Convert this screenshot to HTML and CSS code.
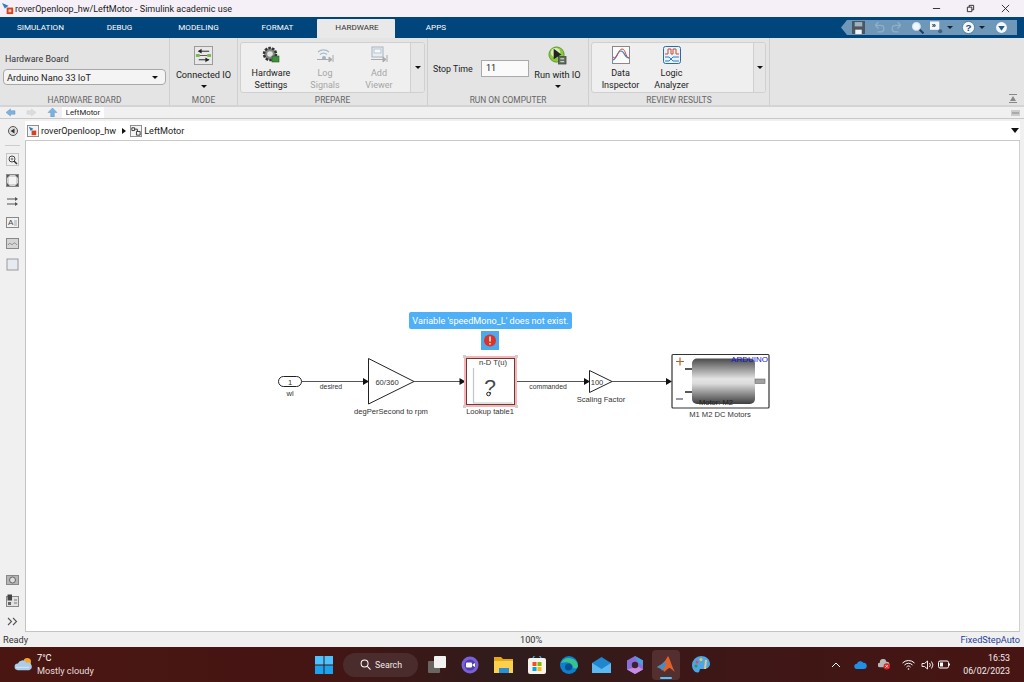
FILE: index.html
```html
<!DOCTYPE html>
<html lang="en">
<head>
<meta charset="utf-8">
<title>roverOpenloop_hw/LeftMotor - Simulink academic use</title>
<link rel="stylesheet" href="styles.css">
</head>
<body>
<div class="app">
  <header class="titlebar">
    <svg class="ico-title" viewBox="0 0 14 14"><path d="M0 1l7 3-4 3z" fill="#2a7fc4"/><rect x="5" y="6" width="7" height="7" fill="#d8401f"/><rect x="7" y="8" width="3" height="3" fill="#f3c9b5"/></svg>
    <span class="title-text">roverOpenloop_hw/LeftMotor - Simulink academic use</span>
    <div class="win-controls">
      <svg viewBox="0 0 10 10" class="win-ico win-min"><path d="M1 5h8" stroke="#222" stroke-width="1"/></svg>
      <svg viewBox="0 0 10 10" class="win-ico win-rest"><path d="M1.5 3.5h5v5h-5zM3.5 3.5v-2h5v5h-2" fill="none" stroke="#222"/></svg>
      <svg viewBox="0 0 10 10" class="win-ico win-close"><path d="M1 1l8 8M9 1l-8 8" stroke="#222"/></svg>
    </div>
  </header>

  <nav class="tabbar">
    <span class="tab">SIMULATION</span>
    <span class="tab">DEBUG</span>
    <span class="tab">MODELING</span>
    <span class="tab">FORMAT</span>
    <span class="tab tab-active">HARDWARE</span>
    <span class="tab tab-apps">APPS</span>
    <div class="qat">
      <svg class="q q-save" viewBox="0 0 12 12"><path d="M0 0h12v12H0z" fill="#4c5660"/><rect x="2.500" y="1" width="7" height="4" fill="#9fb2c2"/><rect x="3" y="8" width="6" height="4" fill="#f0f2f4"/></svg>
      <svg class="q q-undo" viewBox="0 0 12 12"><path d="M3 4h5a3 3 0 0 1 0 6H5M3 4l3-3M3 4l3 3" fill="none" stroke="#8fb0ca" stroke-width="1.200"/></svg>
      <svg class="q q-redo" viewBox="0 0 12 12"><path d="M9 4H4a3 3 0 0 0 0 6h3M9 4L6 1M9 4L6 7" fill="none" stroke="#8fb0ca" stroke-width="1.200"/></svg>
      <svg class="q q-search" viewBox="0 0 12 12"><circle cx="5" cy="5" r="3.600" fill="#f0f6fb" stroke="#cfe0ee" stroke-width="1"/><path d="M8 8l3.500 3.500" stroke="#173f66" stroke-width="1.800"/></svg>
      <svg class="q q-custom" viewBox="0 0 14 13"><rect x="0" y="0" width="10" height="9" fill="#f4f7fa"/><text x="2" y="7" class="q-chev">»</text><circle cx="11" cy="10.500" r="2.200" fill="#3f6280"/></svg>
      <span class="q-arrow q-arrow-a"></span>
      <svg class="q q-help" viewBox="0 0 12 12"><circle cx="6" cy="6" r="5.600" fill="#f4f7fa" stroke="#2f5f86" stroke-width=".6"/><text x="6" y="9.200" class="q-qm">?</text></svg>
      <span class="q-arrow q-arrow-b"></span>
      <svg class="q q-min" viewBox="0 0 12 12"><circle cx="6" cy="6" r="5" fill="#f3f7fa"/><path d="M3 4.500h6L6 9z" fill="#1f5a88"/></svg>
    </div>
  </nav>

  <section class="ribbon">
    <div class="group g-board">
      <div class="group-body board-body">
        <div class="board-label">Hardware Board</div>
        <div class="select"><span>Arduino Nano 33 IoT</span><i class="caret"></i></div>
      </div>
      <div class="group-label">HARDWARE BOARD</div>
    </div>
    <div class="group g-mode">
      <div class="group-body split-body">
        <svg class="ico-big" viewBox="0 0 20 20"><rect x="0.5" y="0.5" width="19" height="19" fill="#e8e8e8" stroke="#999"/><path d="M5 5.500h11M5 14.500h11" stroke="#222"/><path d="M8 3v5l-4-2.500zM12 12v5l4-2.500z" fill="#222"/><rect x="2" y="8.500" width="4" height="3" fill="#7ab648"/><rect x="14" y="8.500" width="4" height="3" fill="#7ab648"/><path d="M6 10h8" stroke="#555"/></svg>
        <div class="btn-text">Connected IO</div>
        <i class="caret caret-center"></i>
      </div>
      <div class="group-label">MODE</div>
    </div>
    <div class="group g-prepare">
      <div class="group-body">
        <div class="gallery">
          <div class="gal-item">
            <svg class="ico-gal" viewBox="0 0 18 18"><circle cx="8" cy="8" r="6" fill="#888" stroke="#333" stroke-width="2.500" stroke-dasharray="2.500 1.200"/><circle cx="8" cy="8" r="2.800" fill="#e2e2e2"/><rect x="10" y="10" width="7" height="6" fill="#3f8f3f" stroke="#1e5e1e" stroke-width=".6"/></svg>
            <span>Hardware</span><span>Settings</span>
          </div>
          <div class="gal-item gal-off">
            <svg class="ico-gal" viewBox="0 0 18 18"><path d="M2 6a8 8 0 0 1 11 0M4 8.500a5 5 0 0 1 7 0" fill="none" stroke="#a6bccb" stroke-width="1.200"/><circle cx="8" cy="12" r="2" fill="#9fb4c2"/><path d="M1 13.500h15M13 11v5l3-2.500zM17 9v7" stroke="#aaa" fill="#aaa"/></svg>
            <span>Log</span><span>Signals</span>
          </div>
          <div class="gal-item gal-off">
            <svg class="ico-gal" viewBox="0 0 18 18"><rect x="2" y="1" width="11" height="10" fill="#e8eef4" stroke="#a6b4c0"/><rect x="4" y="3" width="7" height="4" fill="#f8f8f8" stroke="#b9c6d2"/><path d="M1 13.500h15M13 11v5l3-2.500zM17 9v7" stroke="#aaa" fill="#aaa"/></svg>
            <span>Add</span><span>Viewer</span>
          </div>
          <div class="gal-more"><i class="caret"></i></div>
        </div>
      </div>
      <div class="group-label">PREPARE</div>
    </div>
    <div class="group g-run">
      <div class="group-body run-body">
        <span class="stop-label">Stop Time</span>
        <span class="stop-input">11</span>
        <div class="run-btn">
          <svg class="ico-run" viewBox="0 0 20 20"><circle cx="9" cy="9" r="8" fill="#8cc63f" stroke="#5f9a2a"/><circle cx="8" cy="7" r="5" fill="#d4edb4"/><path d="M6 3l8 6-8 5z" fill="#222"/><rect x="11" y="11" width="8" height="8" fill="#5d6d5d" stroke="#333" stroke-width=".6"/><path d="M13 13.500h4M13 16.500h4" stroke="#e8f2e0"/></svg>
          <div class="btn-text">Run with IO</div>
          <i class="caret caret-center"></i>
        </div>
      </div>
      <div class="group-label">RUN ON COMPUTER</div>
    </div>
    <div class="group g-review">
      <div class="group-body">
        <div class="gallery gallery-review">
          <div class="gal-item gal-narrow">
            <svg class="ico-gal" viewBox="0 0 18 18"><rect x="0.500" y="0.500" width="17" height="17" fill="#fafafa" stroke="#888"/><path d="M1 14c4-1 4-9 8-9s3 7 8 7" fill="none" stroke="#3b7fc4" stroke-width="1.200"/><path d="M1 11c4 4 5-8 9-8s3 8 7 9" fill="none" stroke="#d1492e"/></svg>
            <span>Data</span><span>Inspector</span>
          </div>
          <div class="gal-item gal-narrow">
            <svg class="ico-gal" viewBox="0 0 18 18"><rect x="0.500" y="0.500" width="17" height="17" rx="2" fill="#e8f2fb" stroke="#2f6c98"/><path d="M2 8h3V3h3v5h2V3h3v5h3" fill="none" stroke="#d1492e"/><path d="M2 11h4l4 4h6M2 15h4l4-4h6" fill="none" stroke="#2f7fc4"/></svg>
            <span>Logic</span><span>Analyzer</span>
          </div>
          <div class="gal-more"><i class="caret"></i></div>
        </div>
      </div>
      <div class="group-label">REVIEW RESULTS</div>
    </div>
    <svg class="ribbon-collapse" viewBox="0 0 8 9"><path d="M0 .5h8M0 8.500h8" stroke="#888"/><path d="M4 2l3 5H1z" fill="#888"/></svg>
  </section>

  <div class="docbar">
    <svg class="nav-ico" viewBox="0 0 12 10"><path d="M1 5l5-4v2h5v4H6v2z" fill="#7db2dd" stroke="#5a93c2" stroke-width=".5"/></svg>
    <svg class="nav-ico" viewBox="0 0 12 10"><path d="M11 5L6 1v2H1v4h5v2z" fill="#dcdcdc" stroke="#cfcfcf" stroke-width=".5"/></svg>
    <svg class="nav-ico" viewBox="0 0 12 10"><path d="M6 0l5 5H8v5H4V5H1z" fill="#7db2dd" stroke="#5a93c2" stroke-width=".5"/></svg>
    <span class="doc-tab">LeftMotor</span>
    <svg class="doc-menu" viewBox="0 0 9 6"><rect width="9" height="6" fill="#ccc"/><path d="M1 3h7" stroke="#888"/></svg>
  </div>

  <main class="workspace">
    <aside class="tools">
      <div class="tools-top">
        <svg class="tool tool-back" viewBox="0 0 12 12"><circle cx="6" cy="6" r="4.500" fill="#ddd" stroke="#555"/><path d="M7.500 3.500v5L3.500 6z" fill="#333"/></svg>
        <hr class="tool-sep">
        <svg class="tool" viewBox="0 0 13 13"><rect x=".5" y=".5" width="12" height="12" fill="none" stroke="#999" stroke-dasharray="1 1"/><circle cx="6" cy="6" r="3" fill="#fff" stroke="#444"/><path d="M8 8l3 3" stroke="#333" stroke-width="1.500"/><path d="M4.500 6h3M6 4.500v3" stroke="#444" stroke-width=".7"/></svg>
        <svg class="tool" viewBox="0 0 13 13"><rect x=".5" y=".5" width="12" height="12" fill="#d2d2d2" stroke="#888"/><rect x="3" y="3" width="7" height="7" fill="#f4f4f4"/><path d="M1 1l3 0-3 3zM12 1l-3 0 3 3zM1 12l3 0-3-3zM12 12l-3 0 3-3z" fill="#555"/></svg>
        <svg class="tool" viewBox="0 0 13 13"><path d="M1 4h10M1 9h10" stroke="#555"/><path d="M9 2l3 2-3 2zM9 7l3 2-3 2z" fill="#555"/></svg>
        <svg class="tool" viewBox="0 0 13 13"><rect x=".5" y="1.500" width="12" height="10" fill="#f1f1f1" stroke="#888"/><text x="2" y="9" class="tool-a">A</text><path d="M8 5h3M8 7h3M8 9h3" stroke="#888" stroke-width=".7"/></svg>
        <svg class="tool" viewBox="0 0 13 13"><rect x=".5" y="1.500" width="12" height="10" fill="#d5d5d5" stroke="#888"/><path d="M2 8c2-4 3 1 5-1s2-1 4 1" fill="none" stroke="#888"/></svg>
        <svg class="tool" viewBox="0 0 13 13"><rect x="1" y="1" width="11" height="11" fill="#e8eaf2" stroke="#999"/></svg>
      </div>
      <div class="tools-bottom">
        <svg class="tool" viewBox="0 0 13 13"><rect x=".5" y="2.500" width="12" height="9" fill="#b5b5b5" stroke="#888"/><circle cx="6.500" cy="7" r="3" fill="#ddd" stroke="#666"/></svg>
        <svg class="tool" viewBox="0 0 13 13"><rect x=".5" y="2.500" width="12" height="10" fill="#e2e2e2" stroke="#888"/><rect x="1.500" y=".5" width="4.500" height="6" fill="#444"/><rect x="2" y="8" width="3" height="3" fill="#666"/><path d="M8 6h3M8 9h3" stroke="#777"/></svg>
        <svg class="tool" viewBox="0 0 13 13"><path d="M2 3l3.500 3.500L2 10M7 3l3.500 3.500L7 10" fill="none" stroke="#555" stroke-width="1.100"/></svg>
      </div>
    </aside>

    <div class="editor">
      <div class="crumbs">
        <span class="crumb-ico"><svg viewBox="0 0 13 13"><rect x=".5" y=".5" width="12" height="12" fill="#f4f4f4" stroke="#888"/><path d="M2 2l5 2-3 2.500z" fill="#2a7fc4"/><rect x="5" y="6" width="5" height="5" fill="#d8401f"/></svg></span>
        <span class="crumb-text">roverOpenloop_hw</span>
        <i class="crumb-arrow"></i>
        <span class="crumb-ico"><svg viewBox="0 0 13 13"><rect x=".5" y=".5" width="12" height="12" fill="#f4f4f4" stroke="#888"/><path d="M2 3h3v3H2zM7 7h4v4H7zM5 4.500h3v2.500" fill="none" stroke="#333"/></svg></span>
        <span class="crumb-text">LeftMotor</span>
        <i class="caret crumb-caret"></i>
      </div>
      <div class="canvas">
        <svg class="diagram" viewBox="25 141 995 491">
          <defs>
            <linearGradient id="motorGrad" x1="0" y1="0" x2="0" y2="1">
              <stop offset="0" stop-color="#4a4a4a"/>
              <stop offset=".45" stop-color="#e4e4e4"/>
              <stop offset=".55" stop-color="#dcdcdc"/>
              <stop offset="1" stop-color="#3e3e3e"/>
            </linearGradient>
          </defs>
          <rect x="409" y="312" width="163" height="17" rx="2" class="tip"/>
          <text x="490.500" y="323.500" class="tip-text">Variable 'speedMono_L' does not exist.</text>
          <rect x="481" y="331" width="18" height="19" class="err-bg"/>
          <circle cx="490" cy="340.500" r="6" class="err-dot"/>
          <path d="M490 336.500v5M490 343v1.500" class="err-mark"/>

          <rect x="278.500" y="376.500" width="23" height="10" rx="5" class="block"/>
          <text x="290" y="384.500" class="lbl">1</text>
          <text x="290" y="396" class="lbl">wl</text>
          <path d="M302 381.500h62" class="wire"/>
          <path d="M363 378l6 3.500-6 3.500z" class="head"/>
          <text x="331" y="389" class="lbl lbl-sm">desired</text>

          <path d="M368.500 358.500l45.500 23-45.500 22.500z" class="block"/>
          <text x="387" y="384.500" class="lbl">60/360</text>
          <text x="391" y="414" class="lbl">degPerSecond to rpm</text>
          <path d="M414 381.500h46" class="wire"/>
          <path d="M459.500 378l6 3.500-6 3.500z" class="head"/>

          <rect x="464" y="356" width="53" height="51" class="sel"/>
          <rect x="466.500" y="358.500" width="48" height="46" class="block block-sel"/>
          <path d="M463 356.500h3M515 356.500h3M463 406.500h3M515 406.500h3" class="corner"/>
          <text x="493" y="365" class="lbl">n-D T(u)</text>
          <path d="M473.500 368v35h39" class="axis"/>
          <text x="490" y="394" class="qmark">?</text>
          <circle cx="488.500" cy="394" r="1.800" class="block"/>
          <text x="490" y="414" class="lbl">Lookup table1</text>

          <path d="M517 381.500h68" class="wire"/>
          <path d="M584 378l6 3.500-6 3.500z" class="head"/>
          <text x="548" y="389" class="lbl lbl-sm">commanded</text>
          <path d="M589.500 370.500l22.500 11-22.500 11z" class="block"/>
          <text x="597" y="384.500" class="lbl">100</text>
          <text x="601" y="402" class="lbl">Scaling Factor</text>
          <path d="M612 381.500h55" class="wire"/>
          <path d="M666 378l6 3.500-6 3.500z" class="head"/>

          <rect x="672" y="354.500" width="97" height="53.500" rx="1" class="block block-heavy"/>
          <rect x="692" y="358.500" width="63" height="45.500" rx="5" fill="url(#motorGrad)"/>
          <rect x="755" y="379" width="10" height="4.500" class="shaft"/>
          <path d="M685 369h7M685 392h7" class="pin"/>
          <path d="M676 361.500h8M680 357.500v8" class="plus"/>
          <path d="M676 399h7" class="minus"/>
          <text x="768" y="362" class="ard">ARDUINO</text>
          <text x="716" y="405" class="lbl lbl-motor">Motor: M2</text>
          <text x="720" y="417" class="lbl">M1 M2 DC Motors</text>
        </svg>
      </div>
    </div>
    <div class="right-strip"></div>
  </main>

  <footer class="statusbar">
    <span class="st-left">Ready</span>
    <span class="st-mid">100%</span>
    <span class="st-right">FixedStepAuto</span>
  </footer>

  <div class="taskbar">
    <div class="weather">
      <svg class="ico-weather" viewBox="0 0 20 16"><circle cx="14" cy="5" r="4" fill="#f5a623"/><path d="M4 14a3.500 3.500 0 0 1 0-7 5 5 0 0 1 9-1 4 4 0 0 1 3 8z" fill="#a9cdea"/><path d="M2 11h14" stroke="#dbeaf6"/></svg>
      <div class="weather-text"><span class="w-temp">7°C</span><span class="w-desc">Mostly cloudy</span></div>
    </div>
    <div class="task-center">
      <svg class="t-ico t-win" viewBox="0 0 18 18"><rect width="8.500" height="8.500" fill="#4cc2ff"/><rect x="9.500" width="8.500" height="8.500" fill="#4cc2ff"/><rect y="9.500" width="8.500" height="8.500" fill="#1ba3ee"/><rect x="9.500" y="9.500" width="8.500" height="8.500" fill="#1ba3ee"/></svg>
      <div class="t-search">
        <svg class="t-search-ico" viewBox="0 0 12 12"><circle cx="5" cy="5" r="3.800" fill="none" stroke="#fff" stroke-width="1.100"/><path d="M8 8l3.500 3.500" stroke="#fff" stroke-width="1.100"/></svg>
        <span>Search</span>
      </div>
      <svg class="t-ico t-task" viewBox="0 0 18 18"><rect y="5" width="12" height="12" rx="1" fill="#6b6562"/><rect x="6" width="12" height="12" rx="1" fill="#f2f2f2"/></svg>
      <svg class="t-ico t-chat" viewBox="0 0 18 18"><circle cx="9" cy="9" r="8.500" fill="#7a63d8"/><circle cx="9" cy="9" r="5.500" fill="#4d3fb0"/><rect x="5" y="6.500" width="6" height="5" rx="1" fill="#fff"/><path d="M11.500 8.500l2.500-1.500v4l-2.500-1.500z" fill="#fff"/></svg>
      <svg class="t-ico t-files" viewBox="0 0 19 18"><path d="M0 1h7l2 2h10v14H0z" fill="#e8a80f"/><rect y="5" width="19" height="12" fill="#fcd04f"/><rect x="5" y="12" width="10" height="5" fill="#2a8fd8"/></svg>
      <svg class="t-ico t-store" viewBox="0 0 18 18"><path d="M5 3a4 4 0 0 1 8 0" fill="none" stroke="#3aa0e0" stroke-width="1.500"/><rect y="2" width="18" height="16" rx="2" fill="#f6f3ee"/><rect x="4.500" y="6" width="4" height="4" fill="#f25022"/><rect x="9.500" y="6" width="4" height="4" fill="#7fba00"/><rect x="4.500" y="11" width="4" height="4" fill="#00a4ef"/><rect x="9.500" y="11" width="4" height="4" fill="#ffb900"/></svg>
      <svg class="t-ico t-edge" viewBox="0 0 18 18"><circle cx="9" cy="9" r="9" fill="#0f7fd0"/><path d="M1 7a9 9 0 0 1 17 3c0 3-5 3-5 1 0-3-5-6-12-4z" fill="#37c38f"/><circle cx="8.500" cy="11" r="3.500" fill="#0b4f8f"/></svg>
      <svg class="t-ico t-mail" viewBox="0 0 19 18"><path d="M0 7l9.500-6 9.500 6v10H0z" fill="#1f86d0"/><path d="M0 7l9.500 6L19 7v10H0z" fill="#5cb8f0"/></svg>
      <svg class="t-ico t-m365" viewBox="0 0 16 18"><path d="M8 0l8 4.500v9L8 18l-8-4.500v-9z" fill="#8a6fd8"/><path d="M8 0l8 4.500v5l-5-3z" fill="#4aa0e0"/><path d="M0 13.500l8 4.500 8-4.500-5-3z" fill="#c98ae0"/><circle cx="8" cy="9" r="3.200" fill="#3b2430"/></svg>
      <div class="t-active">
        <svg class="t-matlab" viewBox="0 0 18 18"><path d="M0 11l5-3 3-3 3-5c2 3 4 11 7 16-3-2-4-4-6-4-2 1-3 3-5 4 0-2-3-4-7-5z" fill="#e2612a"/><path d="M0 11l5-3 3-3 1 4-4 6c0-2-3-3-5-4z" fill="#3d8fcb"/></svg>
        <i class="t-underline"></i>
      </div>
      <svg class="t-ico t-paint" viewBox="0 0 18 18"><path d="M9 0a9 9 0 0 0-9 9c0 5 4 9 7 7 1-1 0-3 2-3h3c4 0 6-3 6-5 0-5-4-8-9-8z" fill="#49a7e8"/><circle cx="5" cy="6" r="1.500" fill="#e84a4a"/><circle cx="9" cy="3.500" r="1.500" fill="#f5c842"/><circle cx="4" cy="10" r="1.500" fill="#3c8e4a"/><path d="M14 4l-1 9" stroke="#e8c38a" stroke-width="2"/></svg>
    </div>
    <div class="tray">
      <svg class="tr tr-chev" viewBox="0 0 10 6"><path d="M1 5l4-4 4 4" fill="none" stroke="#fff"/></svg>
      <svg class="tr tr-cloud" viewBox="0 0 14 9"><path d="M3 9a3 3 0 0 1 0-6 4 4 0 0 1 7-1 3.500 3.500 0 0 1 1 7z" fill="#1e90e8"/></svg>
      <svg class="tr tr-sync" viewBox="0 0 14 12"><path d="M2 9a2.500 2.500 0 0 1 0-5 3.500 3.500 0 0 1 7-1 3 3 0 0 1 1 6z" fill="#b8b8b8"/><circle cx="9.500" cy="8" r="3.500" fill="#e32222"/><path d="M8 6.500l3 3M11 6.500l-3 3" stroke="#fff" stroke-width=".8"/></svg>
      <svg class="tr tr-wifi" viewBox="0 0 13 10"><path d="M.5 3a8.500 8.500 0 0 1 12 0M2.500 5a5.500 5.500 0 0 1 8 0M4.500 7a2.500 2.500 0 0 1 4 0" fill="none" stroke="#fff"/><circle cx="6.500" cy="9" r=".8" fill="#fff"/></svg>
      <svg class="tr tr-vol" viewBox="0 0 13 10"><path d="M1 3.500h2.500L6.500 1v8L3.500 6.500H1z" fill="none" stroke="#fff" stroke-width=".9"/><path d="M8.500 3a3 3 0 0 1 0 4M10.500 1.500a5.500 5.500 0 0 1 0 7" fill="none" stroke="#fff" stroke-width=".9"/></svg>
      <svg class="tr tr-bat" viewBox="0 0 13 9"><rect x=".5" y="1" width="10" height="7" rx="1.500" fill="none" stroke="#fff"/><rect x="2" y="2.500" width="3" height="4" fill="#fff"/><path d="M11.500 3.500v2" stroke="#fff"/></svg>
      <div class="clock"><span>16:53</span><span>06/02/2023</span></div>
    </div>
  </div>
</div>
</body>
</html>
```

FILE: styles.css
```css
* { box-sizing: border-box; }
html, body { margin: 0; padding: 0; }
body { width: 1024px; height: 682px; overflow: hidden; font-family: Roboto, "Open Sans", sans-serif; color: #222; background: #f0f0f0; }
.app { display: flex; flex-direction: column; width: 1024px; height: 682px; }
svg { display: block; flex: none; }

.titlebar { flex: 0 0 17px; display: flex; align-items: center; background: #f5f0f7; padding-left: 2px; }
.ico-title { width: 13px; height: 13px; }
.title-text { font-size: 9px; color: #1a1a1a; white-space: nowrap; }
.win-controls { margin-left: auto; display: flex; align-items: center; padding-right: 14px; }
.win-ico { width: 9px; height: 9px; }
.win-rest { margin-left: 25px; }
.win-close { margin-left: 26px; }

.tabbar { flex: 0 0 21px; display: flex; align-items: flex-end; background: #00457c; padding-left: 1px; position: relative; }
.tab { width: 79px; height: 19px; line-height: 17px; text-align: center; color: #fff; font-size: 8.100px; }
.tab-active { width: 78px; padding-left: 2px; background: #e9e9e9; color: #333; border-radius: 1px 1px 0 0; }
.tab-apps { padding-left: 3px; }
.qat { position: absolute; left: 841px; top: 3px; width: 176px; height: 15px; background: #6f97b8; clip-path: polygon(6px 0, 100% 0, 100% 100%, 6px 100%, 0 50%); }
.q { position: absolute; top: 1px; width: 13px; height: 13px; }
.q-save { left: 11px; }
.q-undo { left: 31px; }
.q-redo { left: 50px; }
.q-search { left: 70px; }
.q-custom { left: 89px; width: 13px; }
.q-help { left: 121px; }
.q-min { left: 154px; }
.q-arrow { position: absolute; top: 6px; border-left: 3px solid transparent; border-right: 3px solid transparent; border-top: 3px solid #14232e; }
.q-arrow-a { left: 106px; }
.q-arrow-b { left: 138px; }
.q-chev { font-size: 8px; font-weight: 700; fill: #123; font-family: "Liberation Sans", sans-serif; }
.q-qm { font-size: 9px; font-weight: 700; fill: #1f4a6e; text-anchor: middle; font-family: "Liberation Sans", sans-serif; }

.ribbon { flex: 0 0 69px; display: flex; background: #e4e4e4; position: relative; border-bottom: 2px solid #d4d4d4; min-height: 0; }
.group { display: flex; flex-direction: column; border-right: 1px solid #cfcfcf; }
.group-body { flex: 0 0 58px; position: relative; }
.group-label { flex: 0 0 9px; text-align: center; font-size: 8.400px; color: #666; line-height: 9px; white-space: nowrap; }
.g-board { width: 170px; }
.g-mode { width: 68px; }
.g-prepare { width: 190px; }
.g-run { width: 161px; }
.g-review { width: 181px; }

.caret { display: inline-block; border-left: 3px solid transparent; border-right: 3px solid transparent; border-top: 3.500px solid #111; }
.caret-center { display: block; margin: 4px auto 0; width: 0; }

.board-body { padding: 15px 3px 0 3px; }
.board-label { font-size: 8.900px; padding-left: 2px; line-height: 12px; color: #333; }
.select { margin-top: 4px; width: 163px; height: 16px; border: 1px solid #a8a8a8; border-radius: 4px; background: #f4f4f4; display: flex; align-items: center; justify-content: space-between; padding: 0 7px 0 3px; font-size: 9.200px; color: #222; }

.split-body { display: flex; flex-direction: column; align-items: center; padding-top: 8px; }
.ico-big { width: 19px; height: 19px; }
.btn-text { font-size: 9.200px; margin-top: 4px; line-height: 12px; white-space: nowrap; color: #222; }

.gallery { display: flex; margin: 4px 0 0 2px; height: 51px; background: #efefef; border: 1px solid #d0d0d0; border-radius: 3px; width: 185px; padding-left: 3px; }
.gallery-review { width: 175px; }
.gal-item { width: 54px; display: flex; flex-direction: column; align-items: center; font-size: 9px; line-height: 12px; padding-top: 3px; color: #222; }
.gal-narrow { width: 51px; }
.gal-item span { white-space: nowrap; }
.ico-gal { width: 18px; height: 18px; margin-bottom: 3px; }
.gal-off { color: #a5a5a5; }
.gal-more { margin-left: auto; width: 14px; border-left: 1px solid #d0d0d0; background: #e6e6e6; display: flex; align-items: center; justify-content: center; border-radius: 0 3px 3px 0; }
.gallery-review .gal-more { width: 12px; }

.run-body { display: flex; padding: 0 0 0 5px; }
.stop-label { flex: 0 0 39px; min-width: 0; font-size: 8.800px; margin-top: 25px; line-height: 12px; white-space: nowrap; }
.stop-input { flex: 0 0 48px; height: 17px; margin: 22px 0 0 9px; border: 1px solid #aaa; background: #fafafa; font-size: 9px; line-height: 15px; padding-left: 4px; }
.run-btn { display: flex; flex-direction: column; align-items: center; margin-left: 4px; width: 49px; padding-top: 8px; }
.ico-run { width: 19px; height: 19px; }

.ribbon-collapse { position: absolute; right: 7px; top: 56px; width: 8px; height: 9px; }

.docbar { flex: 0 0 12px; display: flex; align-items: center; background: #f0f0f0; border-bottom: 1px solid #c8c8c8; padding-left: 5px; position: relative; }
.nav-ico { width: 11px; height: 9px; margin-right: 10px; }
.doc-tab { margin-left: -6px; width: 42px; height: 11px; background: #fff; font-size: 7.800px; line-height: 11px; text-align: center; align-self: flex-end; }
.doc-menu { margin-left: auto; margin-right: 4px; width: 9px; height: 6px; }

.workspace { flex: 1; display: flex; min-height: 0; background: #f0f0f0; }
.tools { width: 25px; display: flex; flex-direction: column; justify-content: space-between; align-items: center; padding: 6px 0 4px; background: #f0f0f0; }
.tools-top, .tools-bottom { display: flex; flex-direction: column; align-items: center; gap: 8px; }
.tool { width: 13px; height: 13px; }
.tool-back { width: 12px; height: 12px; }
.tool-sep { width: 15px; margin: 0 0 -1px; border: 0; border-top: 1px solid #ccc; }
.tool-a { font-size: 8px; fill: #444; font-family: "Liberation Sans", sans-serif; }

.editor { flex: 1; display: flex; flex-direction: column; min-width: 0; }
.crumbs { flex: 0 0 22px; display: flex; align-items: center; background: #fff; border: 1px solid #c8c8c8; border-width: 0 0 1px 0; box-shadow: inset 0 2px 0 #f0f0f0; padding: 2px 0 0 2px; font-size: 9.100px; color: #222; margin-right: -4px; }
.crumb-ico svg { width: 12px; height: 12px; }
.crumb-text { margin-left: 2px; white-space: nowrap; }
.crumb-arrow { margin: 0 4px 0 6px; border-top: 3.500px solid transparent; border-bottom: 3.500px solid transparent; border-left: 4px solid #111; }
.crumb-caret { margin-left: auto; margin-right: 5px; border-left-width: 4px; border-right-width: 4px; border-top-width: 5px; }

.canvas { flex: 1; min-height: 0; position: relative; background: #fff; border-left: 1px solid #c4c4c4; border-bottom: 1px solid #c4c4c4; border-right: 1px solid #d0d0d0; }
.diagram { position: absolute; left: -1px; top: 0; width: 995px; height: 491px; font-family: "Liberation Sans", sans-serif; }
.right-strip { width: 4px; background: #f0f0f0; }

.block { fill: #fff; stroke: #222; stroke-width: 1; }
.block-heavy { stroke: #333; stroke-width: 1.200; }
.block-sel { stroke: #6a3a3a; }
.wire { stroke: #555; stroke-width: 1; fill: none; }
.head { fill: #111; }
.lbl { font-size: 7.600px; fill: #333; text-anchor: middle; }
.lbl-sm { font-size: 6.800px; }
.lbl-motor { fill: #222; }
.tip { fill: #4fb0f7; }
.tip-text { font-family: Roboto, sans-serif; font-size: 9.100px; fill: #fff; text-anchor: middle; }
.err-bg { fill: #4da8ee; }
.err-dot { fill: #d8352a; }
.err-mark { stroke: #fff; stroke-width: 1.400; }
.sel { fill: #f8b4b4; stroke: none; }
.corner { stroke: #cfcfcf; stroke-width: 3; }
.axis { fill: none; stroke: #c4c4c4; stroke-width: 1.200; }
.qmark { font-size: 21px; fill: #444; text-anchor: middle; font-family: "Liberation Sans", sans-serif; }
.shaft { fill: #a0a0a0; stroke: #666; stroke-width: .6; }
.pin { stroke: #222; stroke-width: 1.500; }
.plus { stroke: #b4622a; stroke-width: 1.200; }
.minus { stroke: #556; stroke-width: 1.200; }
.ard { font-size: 8px; fill: #1414d8; text-anchor: end; }

.statusbar { flex: 0 0 15px; display: flex; align-items: center; position: relative; background: #f0f0f0; font-size: 9.200px; color: #333; padding: 0 4px 0 3px; }
.st-mid { position: absolute; left: 520px; }
.st-right { margin-left: auto; color: #1f3f9a; }

.taskbar { flex: 0 0 35px; position: relative; display: flex; align-items: center; color: #fff; background: linear-gradient(90deg, #4a1612 0%, #451513 30%, #2f1c1c 50%, #3d1716 70%, #471513 100%); }
.weather { display: flex; align-items: center; margin-left: 14px; width: 301px; }
.ico-weather { width: 19px; height: 15px; }
.weather-text { display: flex; flex-direction: column; margin-left: 4px; font-size: 9.200px; line-height: 12.500px; }
.w-desc { color: #e8dede; }
.task-center { display: flex; align-items: center; }
.t-ico { width: 18px; height: 18px; }
.t-search { margin-left: 10px; width: 75px; height: 24px; border-radius: 12px; background: #4a2c2c; display: flex; align-items: center; padding-left: 17px; font-size: 8.800px; color: #f2eaea; }
.t-search-ico { width: 11px; height: 11px; margin-right: 4px; }
.t-task { margin-left: 10px; }
.t-chat { margin-left: 15px; }
.t-files { margin-left: 15px; width: 19px; }
.t-store { margin-left: 15px; }
.t-edge { margin-left: 14px; }
.t-mail { margin-left: 14px; width: 19px; }
.t-m365 { margin-left: 16px; width: 16px; }
.t-active { margin-left: 9px; width: 28px; height: 30px; background: #532f2f; border-radius: 4px; display: flex; flex-direction: column; align-items: center; padding-top: 6px; }
.t-matlab { width: 18px; height: 18px; }
.t-underline { width: 12px; height: 2px; margin-top: 3px; border-radius: 1px; background: #4cc2ff; }
.t-paint { margin-left: 12px; }
.tray { position: absolute; right: 14px; top: 0; height: 35px; display: flex; align-items: center; }
.tr-chev { width: 10px; height: 6px; }
.tr-cloud { width: 13px; height: 8px; margin-left: 13px; }
.tr-sync { width: 13px; height: 11px; margin-left: 11px; }
.tr-wifi { width: 13px; height: 10px; margin-left: 11px; }
.tr-vol { width: 13px; height: 10px; margin-left: 6px; }
.tr-bat { width: 13px; height: 9px; margin-left: 4px; }
.clock { display: flex; flex-direction: column; align-items: flex-end; margin-left: 12px; font-size: 8.800px; line-height: 12.500px; color: #f4eeee; }
```
